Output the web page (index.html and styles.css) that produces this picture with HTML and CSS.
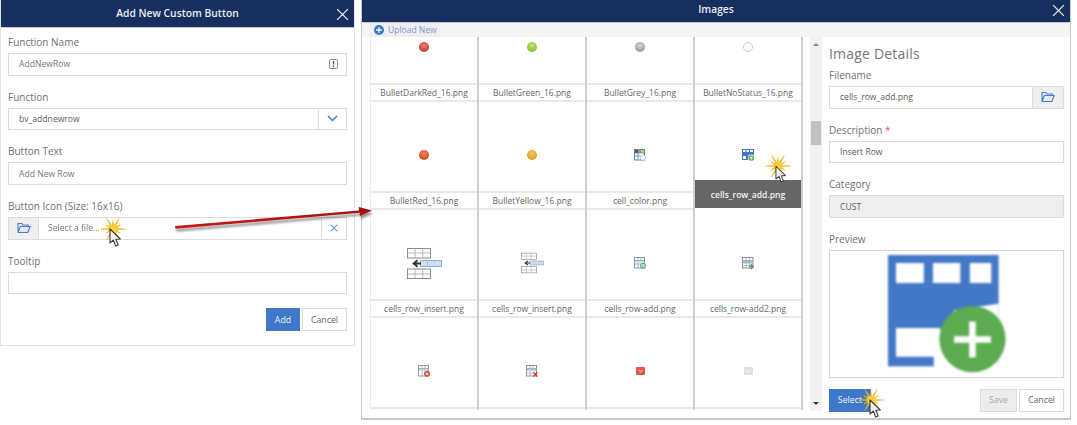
FILE: index.html
```html
<!DOCTYPE html>
<html lang="en">
<head>
<meta charset="utf-8">
<title>Add New Custom Button</title>
<link rel="stylesheet" href="styles.css">
</head>
<body>
<svg class="defs" width="0" height="0" aria-hidden="true">
  <defs>
    <symbol id="folder" viewBox="0 0 14 12">
      <path d="M1 10.500V1.500h4l1 1.500h5.500v1.500M1 10.500h9.800l2.400-6H3.400L1 10.500z" fill="#dfe8f7" stroke="#4a7cc9" stroke-width="1.100" stroke-linejoin="round"/>
    </symbol>
    <symbol id="starburst" viewBox="0 0 28 28">
      <path d="M27.500 14L17.380 14.910 21.790 18.500 16.470 16.470 20.750 25.690 14.910 17.380 14 23 13.090 17.380 7.250 25.690 11.530 16.470 6.210 18.500 10.620 14.910 .5 14 10.620 13.090 6.210 9.500 11.530 11.530 7.250 2.310 13.090 10.620 14 5 14.910 10.620 20.750 2.310 16.470 11.530 21.790 9.500 17.380 13.090z" fill="#f5c01f" stroke="#eeb010" stroke-width=".5" stroke-linejoin="round"/>
      <circle cx="14" cy="14" r="4" fill="#f8cf3a"/>
    </symbol>
    <symbol id="cursor" viewBox="0 0 12 20">
      <path d="M1 1v14l3.400-3 2.200 6 2.600-1-2.300-5.700 4.400-.3z" fill="#f2f2f2" stroke="#3d3d3d" stroke-width="1.100" stroke-linejoin="round"/>
    </symbol>
    <symbol id="grid-blue" viewBox="0 0 12 12">
      <rect width="12" height="11" fill="#4378c6"/>
      <path d="M1 1h2.500v2H1zM4.500 1H7v2H4.500zM8 1h3v2H8zM1 7h3v3H1z" fill="#fff"/>
      <circle cx="9.300" cy="9" r="3.400" fill="#fff"/>
      <circle cx="9.300" cy="9" r="2.800" fill="#5cab50"/>
      <path d="M9.300 7.400v3.200M7.700 9h3.200" stroke="#fff" stroke-width=".9"/>
    </symbol>
    <symbol id="grid-color" viewBox="0 0 12 12">
      <rect x=".5" y=".5" width="10" height="10.500" fill="#fff" stroke="#5b86cb"/>
      <path d="M1 1h3v3H1z" fill="#a8322a"/><path d="M4 1h3v3H4z" fill="#78b84c"/><path d="M7 1h3v3H7z" fill="#e8c23c"/>
      <path d="M.5 7h6M4 4v7M.5 4h10" stroke="#5b86cb" stroke-width=".8"/>
      <circle cx="9" cy="8.600" r="2.600" fill="#fff" stroke="#6f9ad8" stroke-width=".8" stroke-dasharray="1 .7"/>
    </symbol>
    <symbol id="grid-green" viewBox="0 0 12 12">
      <rect x=".5" y=".5" width="10" height="10.500" fill="#fff" stroke="#8a96a8"/>
      <rect x="1" y="3.500" width="9" height="2" fill="#c3d6ef"/>
      <path d="M.5 3.500h10M.5 7h6M4 .5v3M7 .5v3M4 5.500V11" stroke="#9aa3af" stroke-width=".8"/>
      <circle cx="9" cy="8.800" r="3" fill="#5fae74"/>
      <circle cx="9" cy="8.800" r="1.700" fill="#fff"/>
      <path d="M9 7.800v2M8 8.800h2" stroke="#5fae74" stroke-width=".7"/>
    </symbol>
    <symbol id="grid-plus" viewBox="0 0 12 12">
      <rect x=".5" y=".5" width="10.500" height="10.500" fill="#fff" stroke="#8a8f96"/>
      <rect x="1" y="3.500" width="9.500" height="2.400" fill="#aac4e8"/>
      <path d="M.5 3.500h10.500M.5 6h10.500M.5 8.500h10.500M4 .5V11M7.500 .5V11" stroke="#9aa0a8" stroke-width=".7"/>
      <path d="M9.500 7v5M7.200 9.500h4.800" stroke="#4fa45c" stroke-width="1.500"/>
    </symbol>
    <symbol id="grid-del" viewBox="0 0 12 12">
      <rect x=".5" y=".5" width="10" height="10.500" fill="#fff" stroke="#9a9fa6"/>
      <rect x="1" y="3.500" width="9" height="2.200" fill="#bcd0ea"/>
      <path d="M.5 3.500h10M4 .5v3M7 .5v3M4 5.700V11" stroke="#9aa0a8" stroke-width=".7"/>
      <circle cx="9" cy="8.800" r="3" fill="#d2553f"/>
      <path d="M7.900 7.700l2.200 2.200M10.100 7.700l-2.200 2.200" stroke="#fff" stroke-width=".9"/>
    </symbol>
    <symbol id="grid-x" viewBox="0 0 12 12">
      <rect x=".5" y=".5" width="10" height="10.500" fill="#fff" stroke="#8f949b"/>
      <rect x="1" y="3.500" width="9" height="2.200" fill="#aac4e8"/>
      <path d="M.5 3.500h10M.5 8h6M4 .5v3M7 .5v3M4 5.700V11" stroke="#9aa0a8" stroke-width=".7"/>
      <path d="M7.400 7.200l4 4.300M11.400 7.200l-4 4.300" stroke="#c9452f" stroke-width="1.500"/>
    </symbol>
    <symbol id="badge" viewBox="0 0 9 8">
      <rect width="9" height="8" rx="1"/>
      <path d="M2.600 3.200l1.900 1.600 1.900-1.600" fill="none" stroke="#fff" stroke-width=".9"/>
    </symbol>
    <symbol id="row-insert" viewBox="0 0 35 31">
      <rect x=".5" y=".5" width="23" height="9.500" fill="#fff" stroke="#8b8b8b" stroke-width="1"/>
      <path d="M8 .5V10M15.700 .5V10M.5 5h23" stroke="#a5a5a5" stroke-width=".8"/>
      <rect x=".5" y="21" width="23" height="9.500" fill="#fff" stroke="#8b8b8b" stroke-width="1"/>
      <path d="M8 21v9.500M15.700 21v9.500M.5 26h23" stroke="#a5a5a5" stroke-width=".8"/>
      <rect x="13.500" y="12.500" width="21" height="6" fill="#cfe0f4" stroke="#94a9c2"/>
      <path d="M20.500 12.500v6M27.500 12.500v6" stroke="#b4c8e0" stroke-width=".8"/>
      <path d="M14 15.500H7.500M10.500 12.200l-4 3.300 4 3.300" fill="none" stroke="#333" stroke-width="1.800"/>
    </symbol>
  </defs>
</svg>

<section class="dialog dialog-left">
  <header class="title-bar title-bar-left">
    <h1 class="title">Add New Custom Button</h1>
    <svg class="close close-left" viewBox="0 0 12 12"><path d="M1 1l10 10M11 1L1 11"/></svg>
  </header>
  <div class="form">
    <div class="field">
      <label class="label">Function Name</label>
      <div class="input"><span class="input-text">AddNewRow</span>
        <svg class="key-icon" viewBox="0 0 9 10"><rect x=".5" y=".5" width="8" height="9" rx="1" fill="#f4f4f4" stroke="#8a8a8a"/><path d="M4.500 2v3.400M4.500 6.500v1.600" stroke="#555" stroke-width="1.200"/></svg>
      </div>
    </div>
    <div class="field">
      <label class="label">Function</label>
      <div class="input"><span class="input-text dark">bv_addnewrow</span>
        <span class="addon addon-right addon-wide"><svg class="chev" viewBox="0 0 11 7"><path d="M1 1l4.500 4.500L10 1"/></svg></span>
      </div>
    </div>
    <div class="field">
      <label class="label">Button Text</label>
      <div class="input"><span class="input-text">Add New Row</span></div>
    </div>
    <div class="field">
      <label class="label">Button Icon (Size: 16x16)</label>
      <div class="input">
        <span class="addon addon-left"><svg class="folder"><use href="#folder"/></svg></span>
        <span class="input-text file-text">Select a file...</span>
        <span class="addon addon-right addon-clear"><svg class="clear" viewBox="0 0 8 8"><path d="M.7.7l6.600 6.600M7.300.7L.7 7.300"/></svg></span>
      </div>
    </div>
    <div class="field">
      <label class="label">Tooltip</label>
      <div class="input"></div>
    </div>
    <div class="actions">
      <span class="spacer"></span>
      <button class="btn btn-primary btn-add">Add</button>
      <button class="btn btn-default btn-cancel">Cancel</button>
    </div>
  </div>
</section>

<section class="dialog dialog-right">
  <header class="title-bar title-bar-right">
    <h1 class="title">Images</h1>
    <svg class="close close-right" viewBox="0 0 12 12"><path d="M1 1l10 10M11 1L1 11"/></svg>
  </header>
  <div class="toolbar">
    <span class="upload">
      <svg class="upload-icon" viewBox="0 0 10 10"><circle cx="5" cy="5" r="5" fill="#3f78c8"/><path d="M5 2.200v5.600M2.200 5h5.600" stroke="#fff" stroke-width="1.300"/></svg>
      Upload New
    </span>
  </div>
  <div class="workspace">
    <div class="gallery">
      <div class="grid">
        <figure class="cell"><div class="thumb"><span class="bullet bullet-darkred"></span></div><figcaption class="caption">BulletDarkRed_16.png</figcaption></figure>
        <figure class="cell"><div class="thumb"><span class="bullet bullet-green"></span></div><figcaption class="caption">BulletGreen_16.png</figcaption></figure>
        <figure class="cell"><div class="thumb"><span class="bullet bullet-grey"></span></div><figcaption class="caption">BulletGrey_16.png</figcaption></figure>
        <figure class="cell"><div class="thumb"><span class="bullet bullet-none"></span></div><figcaption class="caption">BulletNoStatus_16.png</figcaption></figure>

        <figure class="cell"><div class="thumb"><span class="bullet bullet-red"></span></div><figcaption class="caption">BulletRed_16.png</figcaption></figure>
        <figure class="cell"><div class="thumb"><span class="bullet bullet-yellow"></span></div><figcaption class="caption">BulletYellow_16.png</figcaption></figure>
        <figure class="cell"><div class="thumb"><svg class="ico"><use href="#grid-color"/></svg></div><figcaption class="caption">cell_color.png</figcaption></figure>
        <figure class="cell cell-selected"><div class="thumb"><svg class="ico"><use href="#grid-blue"/></svg></div><figcaption class="caption">cells_row_add.png</figcaption></figure>

        <figure class="cell"><div class="thumb"><svg class="ico-large"><use href="#row-insert"/></svg></div><figcaption class="caption">cells_row_insert.png</figcaption></figure>
        <figure class="cell"><div class="thumb"><svg class="ico-mid"><use href="#row-insert"/></svg></div><figcaption class="caption">cells_row_insert.png</figcaption></figure>
        <figure class="cell"><div class="thumb"><svg class="ico"><use href="#grid-green"/></svg></div><figcaption class="caption">cells_row-add.png</figcaption></figure>
        <figure class="cell"><div class="thumb"><svg class="ico"><use href="#grid-plus"/></svg></div><figcaption class="caption">cells_row-add2.png</figcaption></figure>

        <figure class="cell"><div class="thumb"><svg class="ico"><use href="#grid-del"/></svg></div><figcaption class="caption"></figcaption></figure>
        <figure class="cell"><div class="thumb"><svg class="ico"><use href="#grid-x"/></svg></div><figcaption class="caption"></figcaption></figure>
        <figure class="cell"><div class="thumb"><svg class="badge badge-red"><use href="#badge"/></svg></div><figcaption class="caption"></figcaption></figure>
        <figure class="cell"><div class="thumb"><svg class="badge badge-grey"><use href="#badge"/></svg></div><figcaption class="caption"></figcaption></figure>
      </div>
    </div>
    <div class="scrollbar">
      <span class="sb-arrow sb-up"></span>
      <span class="sb-thumb"></span>
      <span class="sb-arrow sb-down"></span>
    </div>
    <aside class="details">
      <h2 class="details-title">Image Details</h2>
      <div class="field field-r">
        <label class="label">Filename</label>
        <div class="input"><span class="input-text dark">cells_row_add.png</span>
          <span class="addon addon-right addon-grey"><svg class="folder"><use href="#folder"/></svg></span>
        </div>
      </div>
      <div class="field field-r">
        <label class="label">Description <span class="req">*</span></label>
        <div class="input"><span class="input-text dark">Insert Row</span></div>
      </div>
      <div class="field field-r">
        <label class="label">Category</label>
        <div class="input input-disabled"><span class="input-text dark">CUST</span></div>
      </div>
      <div class="field field-preview">
        <label class="label">Preview</label>
        <div class="preview">
          <svg class="preview-img" viewBox="0 0 16 16">
            <rect x="0" y="0" width="15" height="15.100" fill="#4378c6"/>
            <path d="M1.080 1.080h3.780v2.720H1.080zM6.100 1.080h3.700v2.720H6.100zM11.100 1.080h2.900v2.720h-2.900z" fill="#fff"/>
            <path d="M1.080 9.900h6v3.900h-6z" fill="#fff"/>
            <path d="M6.200 16v-4.500l2.800-4 6-.9V16z" fill="#fff"/>
            <circle cx="11.450" cy="11.400" r="4.500" fill="#5cab50"/>
            <path d="M11.450 9v4.900M8.950 11.450h5" stroke="#fff" stroke-width=".9"/>
          </svg>
        </div>
      </div>
      <div class="actions actions-r">
        <button class="btn btn-primary btn-select">Select</button>
        <span class="spacer"></span>
        <button class="btn btn-disabled btn-save">Save</button>
        <button class="btn btn-default btn-cancel">Cancel</button>
      </div>
    </aside>
  </div>
</section>

<svg class="overlay" viewBox="0 0 1077 425" aria-hidden="true">
  <defs>
    <linearGradient id="arrow-fill" x1="0" x2="1" y1="0" y2="0">
      <stop offset="0" stop-color="#c81a1a"/><stop offset="1" stop-color="#a80f12"/>
    </linearGradient>
    <filter id="arrow-shadow" x="-5%" y="-100%" width="110%" height="300%">
      <feGaussianBlur stdDeviation="1.300"/>
    </filter>
  </defs>
  <path d="M175 226l184-15.500-.3-3.500 13.300 3.500-12 5.500-.3-3.200-184.200 16z" fill="#555" opacity=".6" filter="url(#arrow-shadow)" transform="translate(1 3)"/>
  <path d="M175 226l184-15.500-.3-3.500 13.300 3.500-12 5.500-.3-3.200-184.200 16z" fill="url(#arrow-fill)"/>
  <use href="#starburst" x="100" y="216" width="26" height="26"/>
  <use href="#cursor" x="109" y="228" width="12" height="20"/>
  <use href="#starburst" x="765" y="153" width="26" height="26"/>
  <use href="#cursor" x="775" y="165" width="11" height="19"/>
  <use href="#starburst" x="858" y="387" width="26" height="26"/>
  <use href="#cursor" x="869" y="399" width="12" height="20"/>
</svg>
</body>
</html>
```
FILE: styles.css
```css
* { box-sizing: border-box; }

html, body { height: 100%; }

body {
  margin: 0;
  background: #fff;
  font-family: "Open Sans", "Liberation Sans", sans-serif;
  color: #6b6b6b;
  display: flex;
  align-items: flex-start;
  overflow: hidden;
  filter: blur(.35px);
}

.defs { position: absolute; }

.overlay {
  position: absolute;
  left: 0;
  top: 0;
  width: 1077px;
  height: 425px;
  pointer-events: none;
}

.dialog {
  background: #fff;
  display: flex;
  flex-direction: column;
}

.dialog-left {
  width: 355px;
  height: 346px;
  margin-right: 6px;
  border: 1px solid #e2e2e2;
  border-top: 0;
}

.dialog-right {
  width: 710px;
  height: 420px;
  border: 1px solid #c8c8c8;
  border-width: 0 1px 2px 1px;
}

.title-bar {
  background: #172f5f;
  color: #e8ecf3;
  display: flex;
  align-items: center;
  justify-content: center;
  position: relative;
  flex: none;
  border-bottom: 1px solid #c3c8d0;
}

.title-bar-left { height: 28px; padding-bottom: 2px; }
.title-bar-right { height: 23px; padding-bottom: 5px; }

.title {
  margin: 0;
  font-size: 10.300px;
  font-weight: 600;
}

.close {
  position: absolute;
  fill: none;
  stroke: #eef1f6;
  stroke-width: 1.100;
}

.close-left { right: 5px; top: 8px; width: 13px; height: 13px; }
.close-right { right: 5px; top: 4px; width: 13px; height: 13px; }

.form {
  padding: 7px 7px 0 7px;
  display: flex;
  flex-direction: column;
}

.field {
  display: flex;
  flex-direction: column;
  margin-bottom: 14px;
  flex: none;
}

.label {
  font-size: 10px;
  line-height: 14px;
  height: 14px;
  margin-bottom: 4px;
  color: #707070;
}

.req { color: #e0694c; }

.input {
  height: 22.670px;
  border: 1px solid #dcdcdc;
  background: #fff;
  display: flex;
  align-items: center;
  font-size: 8.600px;
  color: #777;
  position: relative;
}

.input-disabled { background: #eee; }

.input-text {
  padding-left: 10px;
  flex: 1;
  white-space: nowrap;
}

.input-text.dark { color: #5c5c5c; }

.file-text { padding-left: 9px; }

.key-icon {
  width: 9px;
  height: 10px;
  margin-right: 8px;
}

.addon {
  height: 100%;
  display: flex;
  align-items: center;
  justify-content: center;
  flex: none;
}

.addon-left {
  width: 30px;
  background: #efefef;
  border-right: 1px solid #dcdcdc;
}

.addon-right {
  border-left: 1px solid #dcdcdc;
}

.addon-wide { width: 28px; }
.addon-clear { width: 25px; }
.addon-grey { width: 31px; background: #efefef; }

.chev {
  width: 11px;
  height: 7px;
  fill: none;
  stroke: #4a7cc9;
  stroke-width: 1.500;
}

.clear {
  width: 8px;
  height: 8px;
  fill: none;
  stroke: #6d94d3;
  stroke-width: 1.100;
}

.folder { width: 14px; height: 12px; }

.actions {
  display: flex;
  gap: 2px;
  height: 23px;
}

.spacer { flex: 1; }

.btn {
  font: inherit;
  font-size: 8.800px;
  height: 23px;
  padding: 0;
  border: 1px solid #dcdcdc;
  background: #fff;
  color: #666;
}

.btn-primary {
  background: #3f78c8;
  border-color: #3f78c8;
  color: #eef3fb;
}

.btn-disabled {
  background: #ececec;
  color: #aaa;
}

.btn-add { width: 34px; }
.btn-cancel { width: 45px; }
.btn-select { width: 42px; }
.btn-save { width: 37px; }

.toolbar {
  height: 14px;
  background: #f5f5f5;
  padding-left: 8px;
  display: flex;
  flex: none;
}

.upload {
  width: 70px;
  background: #eeeeee;
  color: #7a96cf;
  font-size: 8.500px;
  line-height: 14px;
  display: flex;
  align-items: center;
  gap: 4px;
  padding-left: 4px;
  white-space: nowrap;
}

.upload-icon { width: 10px; height: 10px; flex: none; }

.workspace {
  display: flex;
  flex: 1;
  min-height: 0;
}

.gallery {
  width: 448px;
  height: 373px;
  padding-left: 8px;
  overflow: hidden;
  flex: none;
  display: flex;
  flex-direction: column;
}

.grid {
  width: 433px;
  margin-top: -43px;
  display: grid;
  grid-template-columns: repeat(4, 1fr);
  grid-auto-rows: 108px;
  border-left: 1px solid #ececec;
}

.cell {
  margin: 0;
  display: flex;
  flex-direction: column;
  border-right: 2px solid #cfcfcf;
  min-width: 0;
}

.thumb {
  flex: 1;
  padding-top: 17px;
  display: flex;
  align-items: center;
  justify-content: center;
  min-height: 0;
}

.caption {
  flex: none;
  height: 19px;
  border-top: 2px solid #e9e9e9;
  border-bottom: 2px solid #e9e9e9;
  font-size: 8.500px;
  line-height: 15px;
  text-align: center;
  color: #666;
  white-space: nowrap;
}

.cell-selected .caption {
  height: 28px;
  margin-top: -9px;
  margin-bottom: 2px;
  padding-top: 5px;
  background: #666;
  color: #f4f4f4;
  font-weight: 600;
  border-color: #666;
  margin-top: -11px;
}

.bullet {
  width: 10px;
  height: 10px;
  border-radius: 50%;
  display: block;
}

.bullet-darkred { background: radial-gradient(circle at 50% 35%, #e8857c, #c93b31 70%); }
.bullet-green { background: radial-gradient(circle at 50% 35%, #c6e47a, #8dbf35 70%); }
.bullet-grey { background: radial-gradient(circle at 50% 35%, #cfdcdc, #92a2a2 70%); }
.bullet-none { background: #fff; border: 1.500px solid #cfcfcf; }
.bullet-red { background: radial-gradient(circle at 50% 35%, #ef8b62, #d94f24 70%); }
.bullet-yellow { background: radial-gradient(circle at 50% 35%, #f3cd65, #dc9f1c 70%); }

.ico { width: 12px; height: 12px; display: block; }
.ico-large { width: 35px; height: 31px; display: block; }
.ico-mid { width: 23px; height: 22px; display: block; }

.badge { width: 9px; height: 8px; display: block; }
.badge-red { fill: #e4534c; }
.badge-grey { fill: #e0e0e0; }

.scrollbar {
  width: 12px;
  height: 374px;
  background: #f1f1f1;
  position: relative;
  flex: none;
}

.sb-thumb {
  position: absolute;
  left: 1px;
  right: 1px;
  top: 84px;
  height: 24px;
  background: #c1c1c1;
}

.sb-arrow {
  position: absolute;
  left: 3px;
  width: 0;
  height: 0;
  border-left: 3px solid transparent;
  border-right: 3px solid transparent;
}

.sb-up { top: 6px; border-bottom: 3px solid #8a8a8a; }
.sb-down { bottom: 6px; border-top: 3px solid #333; }

.details {
  flex: 1;
  padding: 0 6px 0 7px;
  display: flex;
  flex-direction: column;
  min-width: 0;
}

.details-title {
  margin: 9px 0 6px;
  font-size: 14px;
  line-height: 16px;
  font-weight: 400;
  color: #777;
  letter-spacing: .2px;
}

.field-preview { margin-bottom: 11px; }

.preview {
  height: 128px;
  border: 1px solid #d4d4d4;
  display: flex;
  justify-content: center;
  align-items: center;
  overflow: hidden;
}

.preview-img {
  width: 118px;
  height: 118px;
  filter: blur(.9px);
}
```
